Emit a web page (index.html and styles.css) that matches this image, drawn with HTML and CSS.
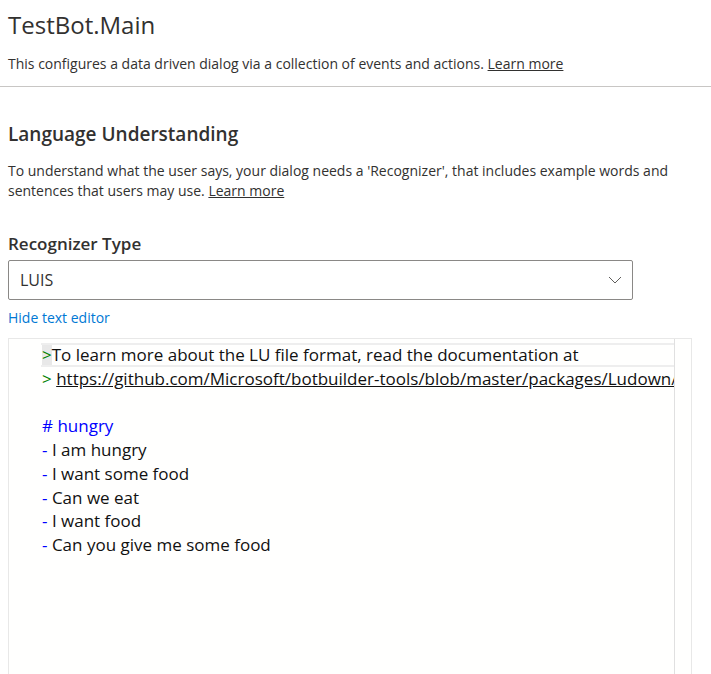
FILE: index.html
```html
<!DOCTYPE html>
<html lang="en">
<head>
    <meta charset="UTF-8">
    <meta name="viewport" content="width=device-width, initial-scale=1.0">
    <title>TestBot.Main</title>
    <link rel="stylesheet" href="styles.css">
</head>
<body>
    <!-- Dialog header -->
    <div class="header">
        <h1 class="title">TestBot.Main</h1>
        <p class="description">This configures a data driven dialog via a collection of events and actions. <a href="#" class="learn-more">Learn more</a></p>
    </div>

    <div class="section">
        <h2 class="section-title">Language Understanding</h2>
        <p class="description">To understand what the user says, your dialog needs a 'Recognizer', that includes example words and sentences that users may use. <a href="#" class="learn-more">Learn more</a></p>

        <label class="field-label">Recognizer Type</label>
        <div class="dropdown">
            <span class="dropdown-value">LUIS</span>
            <svg class="chevron" width="14" height="8" viewBox="0 0 14 8">
                <path d="M1 1 L7 7 L13 1" fill="none" stroke="#605e5c" stroke-width="1"/>
            </svg>
        </div>

        <a href="#" class="toggle-link">Hide text editor</a>

        <!-- LU text editor -->
        <div class="editor">
            <div class="gutter"></div>
            <div class="lines">
                <div class="line current"><span class="cursor-mark">&gt;</span>To learn more about the LU file format, read the documentation at</div>
                <div class="line"><span class="comment">&gt;</span> <span class="url">https://github.com/Microsoft/botbuilder-tools/blob/master/packages/Ludown/docs/lu-file-format.md</span></div>
                <div class="line"></div>
                <div class="line"><span class="intent"># hungry</span></div>
                <div class="line"><span class="dash">-</span> I am hungry</div>
                <div class="line"><span class="dash">-</span> I want some food</div>
                <div class="line"><span class="dash">-</span> Can we eat</div>
                <div class="line"><span class="dash">-</span> I want food</div>
                <div class="line"><span class="dash">-</span> Can you give me some food</div>
            </div>
            <div class="ruler"></div>
        </div>
    </div>
</body>
</html>
```

FILE: styles.css
```css
body {
    margin: 0;
    font-family: "Open Sans", "Noto Sans", sans-serif;
    color: #323130;
    background-color: #fff;
}

a {
    color: inherit;
}

.header {
    padding: 6px 8px 12px;
    border-bottom: 1px solid #c8c6c4;
}

.title {
    margin: 0;
    font-size: 24px;
    font-weight: 400;
    line-height: 38px;
}

.description {
    margin: 0;
    font-size: 14px;
    line-height: 20px;
}

.header .description {
    margin-top: 10px;
}

.learn-more {
    text-decoration: underline;
}

.section {
    padding: 0 8px;
}

.section-title {
    margin: 33px 0 13px;
    font-size: 19px;
    font-weight: 600;
    line-height: 28px;
}

.field-label {
    display: block;
    margin-top: 29px;
    font-size: 17px;
    font-weight: 600;
    line-height: 28px;
}

.dropdown {
    display: flex;
    align-items: center;
    justify-content: space-between;
    width: 625px;
    height: 40px;
    margin-top: 2px;
    padding: 0 10px 0 11px;
    box-sizing: border-box;
    border: 1px solid #8a8886;
    border-radius: 2px;
}

.dropdown-value {
    font-size: 16px;
}

.toggle-link {
    display: block;
    margin-top: 8px;
    font-size: 14px;
    line-height: 20px;
    color: #0078d4;
    text-decoration: none;
}

/* Editor */
.editor {
    display: flex;
    width: 684px;
    height: 360px;
    margin-top: 10px;
    box-sizing: border-box;
    border-top: 1px solid #e8e8e8;
    border-left: 1px solid #e8e8e8;
    border-right: 1px solid #e8e8e8;
    background-color: #fffffe;
    overflow: hidden;
}

.gutter {
    flex: 0 0 32px;
}

.lines {
    flex: 1;
    min-width: 0;
    padding-top: 4px;
    font-size: 17px;
    color: #111;
}

.line {
    height: 23.75px;
    line-height: 23.75px;
    padding-left: 1px;
    white-space: nowrap;
    overflow: hidden;
    box-sizing: border-box;
}

.line.current {
    border-top: 2px solid #eeeeee;
    border-bottom: 2px solid #eeeeee;
    line-height: 19.75px;
}

.cursor-mark {
    color: #008000;
    background-color: #e8e8e8;
}

.comment {
    color: #008000;
}

.url {
    text-decoration: underline;
}

.intent,
.dash {
    color: #0000ff;
}

.ruler {
    flex: 0 0 16px;
    border-left: 1px solid #e0e0e0;
}
```
